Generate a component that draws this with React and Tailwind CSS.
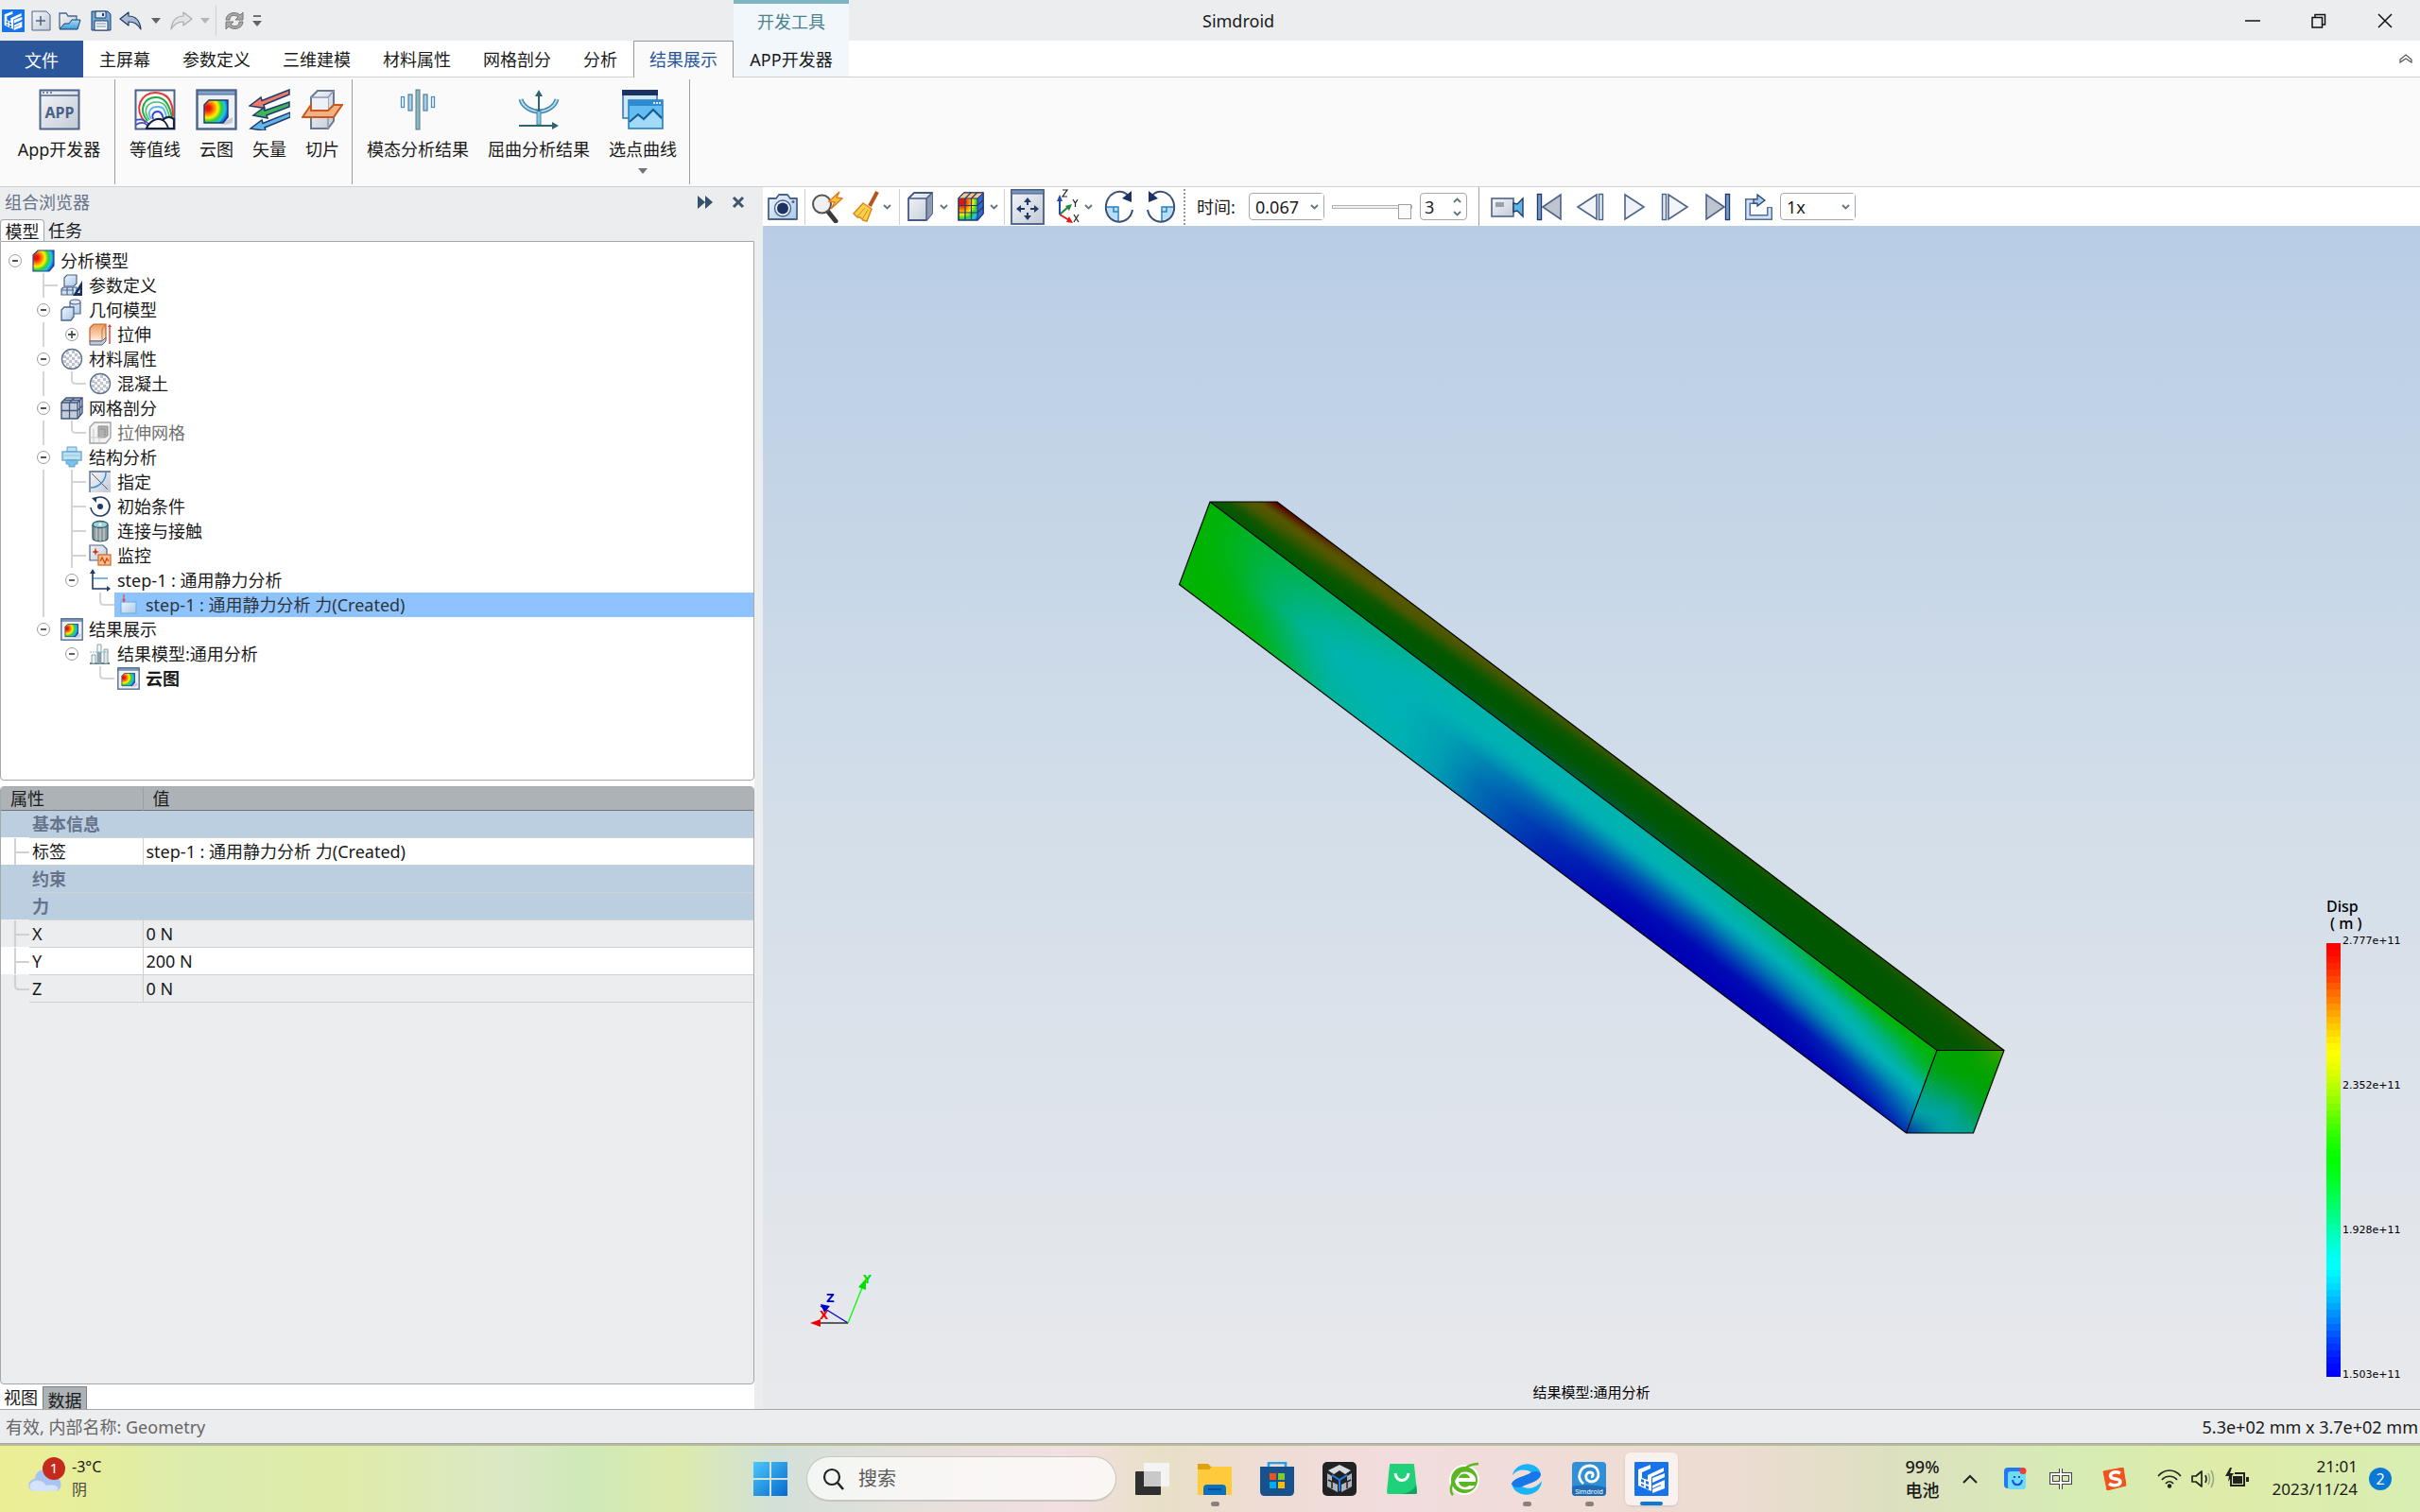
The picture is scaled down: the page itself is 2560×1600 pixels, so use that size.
import React from "react";

/* ---------- shared helpers ---------- */

const Svg = ({ w = 24, h = 24, vb, children, className = "" }) => (
  <svg width={w} height={h} viewBox={vb || `0 0 ${w} ${h}`} fill="none" className={`shrink-0 ${className}`} aria-hidden="true">
    {children}
  </svg>
);

const Defs = () => (
  <svg width="0" height="0" className="absolute" aria-hidden="true">
    <defs>
      <radialGradient id="rainbow" cx="0.15" cy="0.35" r="0.95">
        <stop offset="0.1" stopColor="#e8120c" />
        <stop offset="0.3" stopColor="#ff8a00" />
        <stop offset="0.45" stopColor="#fff200" />
        <stop offset="0.62" stopColor="#2fd23a" />
        <stop offset="0.78" stopColor="#19c6e8" />
        <stop offset="0.95" stopColor="#1b2fe0" />
      </radialGradient>
      <linearGradient id="steel" x1="0" y1="0" x2="1" y2="1">
        <stop offset="0" stopColor="#f4f6f9" />
        <stop offset="1" stopColor="#c3cad6" />
      </linearGradient>
      <linearGradient id="sky" x1="0" y1="0" x2="0" y2="1">
        <stop offset="0" stopColor="#a6dcf7" />
        <stop offset="1" stopColor="#3a9ade" />
      </linearGradient>
      <linearGradient id="ice" x1="0" y1="0" x2="1" y2="1">
        <stop offset="0" stopColor="#eef5fc" />
        <stop offset="1" stopColor="#a9c9e8" />
      </linearGradient>
      <linearGradient id="amber" x1="0" y1="0" x2="0" y2="1">
        <stop offset="0" stopColor="#ee9a5a" />
        <stop offset="1" stopColor="#fdf0e2" />
      </linearGradient>
      <linearGradient id="win" x1="0" y1="0" x2="1" y2="1">
        <stop offset="0" stopColor="#4cc8fb" />
        <stop offset="1" stopColor="#0669cc" />
      </linearGradient>
    </defs>
  </svg>
);

const NAVY = "#1f3a68";
const SLATE = "#4c6389";

const Caret = ({ className = "text-[#606468]" }) => (
  <Svg w={10} h={6} className={className}><path d="M0 0H10L5 6Z" fill="currentColor" /></Svg>
);
const Chevron = () => (
  <Svg w={9} h={6} className="text-[#5f7481]"><path d="M1 1 4.500 4.500 8 1" stroke="currentColor" strokeWidth="1.800" /></Svg>
);

const Logo = ({ size }) => (
  <Svg w={size} h={size} vb="0 0 36 36">
    <rect width="36" height="36" rx="1" fill="#1673ea" />
    <path d="M4 8 17 3V7L8 11V17L14 19V14L31 6V10L18 16V31L4 25Z" fill="#fff" />
    <path d="M19 17 32 12V16L19 22ZM19 25 32 19V28L19 33V29L28 25V24L19 28Z" fill="#fff" />
    <path d="M7 18 10 19V22L7 21ZM12 20 15 21V24L12 23ZM7 23 10 24V26L7 25ZM12 25 15 26V29L12 28Z" fill="#1673ea" />
  </Svg>
);

/* ---------- quick access icons ---------- */

const NewIcon = () => (
  <Svg w={22} h={22}><path d="M2 1H17L21 5V21H2Z" fill="url(#steel)" stroke={SLATE} /><path d="M11 6V16M6 11H16" stroke={SLATE} strokeWidth="1.500" /></Svg>
);
const OpenIcon = () => (
  <Svg w={24} h={22}><path d="M1 19V3H8L10 6H19V10" fill="url(#steel)" stroke={SLATE} strokeWidth="1.300" /><path d="M1 20 6 14H11L14 10H23L20 20Z" fill="url(#sky)" stroke={NAVY} /></Svg>
);
const SaveIcon = () => (
  <Svg w={22} h={22}><path d="M1 1H18L21 4V21H1Z" fill="#6ea9d6" stroke={NAVY} /><path d="M5 1H16V8H5Z" fill="#dcebf7" stroke={NAVY} /><path d="M12 3H14V6H12Z" fill={NAVY} /><path d="M4 11H18V21H4Z" fill="#f3f5f8" stroke={NAVY} /><path d="M6 14H16M6 17H16" stroke="#7d8ea8" /></Svg>
);
const UndoIcon = ({ flip }) => (
  <Svg w={24} h={20} className={flip ? "-scale-x-100 opacity-50" : ""}><path d="M1 8 10 1V5C18 5 22 10 23 19C19 13 16 11 10 11V15Z" fill={flip ? "#d8dadd" : "#a9bad1"} stroke={flip ? "#6a6d70" : NAVY} strokeWidth="1.200" strokeLinejoin="round" /></Svg>
);
const RefreshIcon = () => (
  <Svg w={22} h={22}><path d="M2 10C2 3 12 0 17 5L20 2V10H12L15 7C11 4 6 5 6 10Z" fill="#a8a8a8" stroke="#777" /><path d="M20 12C20 19 10 22 5 17L2 20V12H10L7 15C11 18 16 17 16 12Z" fill="#a8a8a8" stroke="#777" /></Svg>
);

/* ---------- ribbon icons ---------- */

const AppIcon = () => (
  <Svg w={44} h={44}>
    <rect x="1.500" y="1.500" width="41" height="41" fill="url(#steel)" stroke={SLATE} strokeWidth="2" />
    <path d="M2 7H42" stroke={SLATE} strokeWidth="1.500" /><path d="M4 4H6M8 4H10M12 4H14" stroke={SLATE} strokeWidth="1.500" />
    <text x="22" y="31" textAnchor="middle" fontSize="16" fontWeight="700" fontFamily="Noto Sans" fill="#4a6187">APP</text>
  </Svg>
);
const ContourIcon = () => (
  <Svg w={44} h={44}>
    <rect x="1.500" y="1.500" width="41" height="41" fill="#f7f9fc" stroke={SLATE} strokeWidth="2" />
    <path d="M12 36C-2 20 8 4 22 4S41 15 41 29" stroke="#e33" strokeWidth="2" />
    <path d="M14 34C3 20 12 9 23 9S38 19 40 31" stroke="#22a844" strokeWidth="2" />
    <path d="M16 33C8 22 14 14 24 14S35 22 38 32" stroke="#49c46a" strokeWidth="1.700" />
    <path d="M18 32C13 25 17 19 25 19S32 24 35 32" stroke="#5fb6e6" strokeWidth="1.800" />
    <path d="M20 32C18 27 21 24 25 24S30 28 31 32" stroke="#3046d8" strokeWidth="1.800" />
    <path d="M2 38C8 34 14 36 15 42M2 33C8 31 14 34 16 39" stroke="#3a50c8" strokeWidth="1.600" />
    <path d="M13 42C16 34 24 30 30 33C34 29 38 29 42 32V42Z" fill="#fff" stroke="#14213f" strokeWidth="2.200" />
    <path d="M30 33C33 35 35 38 36 42" stroke="#14213f" strokeWidth="1.800" />
  </Svg>
);
const CloudMapIcon = ({ size = 44 }) => (
  <Svg w={size} h={size} vb="0 0 44 44">
    <rect x="1.500" y="1.500" width="41" height="41" fill="#edf0f5" stroke={SLATE} strokeWidth="2.400" />
    <path d="M2 2H42V6H2Z" fill="#7fa3cf" stroke={SLATE} strokeWidth="1.200" />
    <path d="M26 37 39 30V36L32 38Z" fill="#c4cad4" />
    <path d="M9 17 14 12H34V30L29 36H9Z" fill="url(#rainbow)" stroke="#20386a" strokeWidth="1.400" />
  </Svg>
);
const VectorIcon = () => {
  const arrow = "M0 12 12 3 13 6.500 42 -5V0L15 11 16 14.500Z";
  return (
    <Svg w={44} h={44}>
      <path transform="translate(1 6)" d={arrow} fill="#ec7a6c" stroke={NAVY} strokeWidth="1.500" />
      <path transform="translate(5 18)" d="M0 10 11 2 12 5 38 -4V1L14 10 15 13Z" fill="#3db35a" stroke={NAVY} strokeWidth="1.500" />
      <path transform="translate(2 30)" d={arrow} fill="#62b4ec" stroke={NAVY} strokeWidth="1.500" />
    </Svg>
  );
};
const SliceIcon = () => (
  <Svg w={44} h={44}>
    <path d="M10 41V9L17 2H34V34L28 42H10Z" fill="url(#steel)" stroke="#6a7894" strokeWidth="2" />
    <path d="M10 9H28V42M28 9 34 2" stroke="#8f9bb0" strokeWidth="1.500" />
    <path d="M1 30 10 17V23H28L34 17H43L34 30Z" fill="#f3b183" stroke="#c9571b" strokeWidth="2" />
    <path d="M11 10H28V22H11Z" fill="#eef1f6" />
  </Svg>
);
const ModalIcon = () => (
  <Svg w={44} h={44}>
    <rect x="20" y="1" width="4" height="42" fill="#8fb7be" stroke="#4f7a88" />
    <rect x="12" y="6" width="4" height="17" fill="#a9cfe4" stroke="#4a7ea5" strokeWidth="1.200" />
    <rect x="28" y="6" width="4" height="17" fill="#a9cfe4" stroke="#4a7ea5" strokeWidth="1.200" />
    <rect x="4.500" y="8.500" width="3" height="11" stroke="#4a8fc4" strokeWidth="1.300" />
    <rect x="36.500" y="8.500" width="3" height="11" stroke="#4a8fc4" strokeWidth="1.300" />
  </Svg>
);
const BucklingIcon = () => (
  <Svg w={44} h={44}>
    <path d="M3 11C5 19 14 24 22 24S39 19 41 11" stroke="#3e86b0" strokeWidth="5" />
    <path d="M3 11C5 19 14 24 22 24S39 19 41 11" stroke="#b8dcee" strokeWidth="2" />
    <path d="M20 23H24V38H20Z" fill="#8ec3e2" stroke="#3e86b0" />
    <path d="M22 6V24" stroke="#2d6470" strokeWidth="2" /><path d="M22 1 26 8H18Z" fill="#2d6470" />
    <path d="M1 39H38" stroke="#2d6470" strokeWidth="2" /><path d="M36 35 43 39 36 43Z" fill="#2d6470" />
  </Svg>
);
const CurveIcon = () => (
  <Svg w={44} h={44}>
    <rect x="1" y="2" width="36" height="29" fill="#cfe8f6" stroke="#3b6fa5" strokeWidth="1.500" />
    <path d="M0 1H38V7H0Z" fill="#1c3263" />
    <rect x="7" y="12" width="36" height="30" fill="#62bdf0" stroke="#2779bb" strokeWidth="1.500" />
    <path d="M7 12H43V18H7Z" fill="#2f8bd0" /><path d="M33 15H41" stroke="#d6eefc" strokeWidth="2" strokeDasharray="2 1" />
    <path d="M8 35 17 27 23 32 33 22 42 31" stroke="#1c568f" strokeWidth="2" />
    <path d="M8 41V36L17 29 23 34 33 24 42 33V41Z" fill="#b3e2fa" opacity="0.8" />
  </Svg>
);

/* ---------- tree icons ---------- */

const RainbowCube = () => (
  <Svg><path d="M1 6 6 1H23V17L18 23H1Z" fill="url(#rainbow)" stroke="#27457c" strokeWidth="1.200" /></Svg>
);
const ParamIcon = () => (
  <Svg><path d="M4 13V4L7 1H17V10L14 13Z" fill="url(#ice)" stroke={SLATE} strokeWidth="1.200" /><path d="M1 22V16L3 14H17V22ZM1 17H14M7 14V22M13 14V22" fill="#cfe0f1" stroke={SLATE} strokeWidth="1.200" /><path d="M13 23 23 7V23ZM18 20H20.500V16Z" fill="#16305f" fillRule="evenodd" /></Svg>
);
const GeometryIcon = () => (
  <Svg><path d="M10 4V16H21V4" fill="url(#ice)" stroke={SLATE} strokeWidth="1.200" /><ellipse cx="15.500" cy="3.500" rx="5.500" ry="2.500" fill="#dce9f6" stroke={SLATE} strokeWidth="1.200" /><path d="M1 23V12L4 9H14V19L11 23Z" fill="url(#ice)" stroke={SLATE} strokeWidth="1.300" /></Svg>
);
const ExtrudeIcon = () => (
  <Svg><path d="M1 19V5L5 1H18V16L14 19Z" fill="url(#amber)" stroke="#bf5f2a" strokeWidth="1.200" /><path d="M1 19 14 19 18 15V19L14 23H1Z" fill="#c3cbd8" stroke={SLATE} /><path d="M14 19V6L18 1" stroke="#c9733e" /><path d="M22 3V22" stroke="#e33" strokeWidth="1.400" /><path d="M20 4 22 1 24 4Z" fill="#e33" /></Svg>
);
const MaterialIcon = () => (
  <Svg>
    <circle cx="12" cy="12" r="10.500" fill="#f6f7f9" />
    <path d="M6 4H9V7H6ZM12 3H15V6H12ZM9 7H12V10H9ZM15 6H18V9H15ZM3 8H6V11H3ZM6 10H9V13H6ZM12 10H15V13H12ZM18 9H21V12H18ZM3 13H6V16H3ZM9 13H12V16H9ZM15 13H18V16H15ZM6 16H9V19H6ZM12 16H15V19H12ZM18 15H20V18H18ZM9 19H12V22H9ZM15 19H17V21H15Z" fill="#bfc3c9" />
    <circle cx="12" cy="12" r="10.500" stroke="#5b7090" strokeWidth="1.400" />
  </Svg>
);
const MeshIcon = () => (
  <Svg><path d="M1 6 6 1H23V17L18 23H1Z" fill="#c5ccda" stroke="#41577d" strokeWidth="1.400" /><path d="M1 6H18V23M18 6 23 1M9.500 6V23M1 14.500H18M9.500 6 14.500 1M18 14.500 23 9.500M3.500 3.500H20.500V20" stroke="#41577d" strokeWidth="1.300" /></Svg>
);
const MeshGreyIcon = () => (
  <Svg><path d="M1 6 6 1H23V17L18 23H1Z" fill="#f2f2f2" stroke="#a3a3a3" strokeWidth="1.400" /><path d="M10 5H20V15L17 17H10Z" fill="#b0b0b0" stroke="#8e8e8e" /><path d="M12 8H17V15" stroke="#8e8e8e" /><path d="M5 8V22M1 17H16M11 17V23" stroke="#cacaca" /></Svg>
);
const StructureIcon = () => (
  <Svg><path d="M7 1H17V6H7Z" fill="#bfe0f2" stroke="#5aa4cf" /><rect x="2" y="6" width="20" height="9" fill="#bfe0f2" stroke="#5aa4cf" strokeWidth="1.300" /><path d="M6 15H18V19H15V22H9V19H6Z" fill="#7cc3ea" stroke="#5aa4cf" /><path d="M2 10H22" stroke="#8fc6e4" /></Svg>
);
const AssignIcon = () => (
  <Svg><path d="M1 1H23V23H1Z" fill="url(#steel)" /><path d="M1 23V1H23" stroke={SLATE} strokeWidth="1.300" /><path d="M3 3 20 20" stroke="#5a5f68" /><path d="M2 18C10 18 18 11 18 2" stroke="#3a92cf" strokeWidth="1.500" /></Svg>
);
const InitIcon = () => (
  <Svg><path d="M6 4A10 10 0 1 1 2 13" stroke={NAVY} strokeWidth="1.600" /><path d="M3 3 8 2 8 8Z" fill={NAVY} /><circle cx="12" cy="12" r="3" fill={NAVY} /></Svg>
);
const ContactIcon = () => (
  <Svg><path d="M4 5V19C4 24 20 24 20 19V5" fill="#8d989b" stroke="#2e5f68" strokeWidth="1.300" /><path d="M8 8V22M12 8V23M16 8V22" stroke="#dadedf" /><ellipse cx="12" cy="5" rx="8" ry="3.500" fill="#9ed0d8" stroke="#2e5f68" strokeWidth="1.300" /><circle cx="12" cy="5" r="1.500" fill="#fff" /></Svg>
);
const MonitorIcon = () => (
  <Svg><path d="M1 1H15L19 5V17H1Z" fill="url(#steel)" stroke={SLATE} strokeWidth="1.200" /><path d="M7 3 8 7 11 8 8 9 7 12 6 9 3 8 6 7Z" fill="#c0391e" /><rect x="10" y="11" width="13" height="11" fill="#f9c18e" stroke="#d9692a" strokeWidth="1.300" /><path d="M12 18 14 14 17 20 19 15 21 18" stroke="#c6471a" strokeWidth="1.300" /></Svg>
);
const StepIcon = () => (
  <Svg><path d="M4 3V21H21" stroke={NAVY} strokeWidth="1.600" /><path d="M1 5 4 0 7 5ZM19 18 23 21 19 24Z" fill={NAVY} /><path d="M5 10H20" stroke="#7ab8e0" strokeWidth="2" /></Svg>
);
const ForceIcon = () => (
  <Svg><rect x="4" y="9" width="16" height="12" fill="url(#ice)" stroke="#6da7dc" /><path d="M7 1V7" stroke="#d4554a" strokeWidth="1.300" /><path d="M5 6 7 10 9 6Z" fill="#d4554a" /></Svg>
);
const ResultModelIcon = () => (
  <Svg><path d="M1 22H22" stroke="#2e5f68" strokeWidth="1.600" /><path d="M3 13H7V22H3Z" fill="#eef2f4" stroke="#8ca0aa" /><path d="M9 2H13V22H9Z" fill="#f4f6f7" stroke="#8ca0aa" /><path d="M9 10H13V22H9Z" fill="#8ca0aa" /><path d="M16 7H20V22H16Z" fill="#dfe7ea" stroke="#8ca0aa" /><path d="M1 10H22" stroke="#7ab8e0" strokeDasharray="2 1" /></Svg>
);

/* ---------- viewport toolbar icons ---------- */

const CameraIcon = () => (
  <Svg w={34} h={30}><path d="M2 6H10L13 2H22L25 6H32V28H2Z" fill="url(#ice)" stroke={SLATE} strokeWidth="1.800" strokeLinejoin="round" /><circle cx="17" cy="16.500" r="8.500" fill="#e8f1fb" stroke={SLATE} strokeWidth="1.400" /><circle cx="17" cy="16.500" r="6" fill="#1c3263" /><circle cx="28" cy="9.500" r="1.500" fill={SLATE} /></Svg>
);
const SearchFlashIcon = () => (
  <Svg w={34} h={34}><path d="M18 22 26 32" stroke="#3a3a3a" strokeWidth="5" strokeLinecap="round" /><circle cx="11.500" cy="14" r="9.500" fill="#eef0f2" stroke="#555" strokeWidth="2" /><path d="M30 1 19 11 25 12 21 19 33 8 27 7Z" fill="#fbc23a" stroke="#e07a1c" strokeWidth="1.400" /></Svg>
);
const BroomIcon = () => (
  <Svg w={28} h={34}><path d="M26 1 18 16" stroke="#b4561d" strokeWidth="4" /><path d="M11 13 20 19 15 32 11 31 8 28 5 28 1 24Z" fill="#fccf4e" stroke="#d98a16" strokeWidth="1.500" /><path d="M13 18 5 27M16 20 10 30" stroke="#d98a16" /></Svg>
);
const CubeIcon = () => (
  <Svg w={30} h={34}><path d="M1 8 7 2H26V24L20 31H1Z" fill="url(#steel)" stroke="#455b82" strokeWidth="1.800" /><path d="M20 8 26 2V24L20 31Z" fill="#8e9bb3" /><path d="M1 8H20V31M20 8 26 2" stroke="#455b82" strokeWidth="1.400" /></Svg>
);
const ColorCubeIcon = () => (
  <Svg w={30} h={34}><path d="M1 8 7 2H27V24L21 31H1Z" fill="url(#rainbow)" stroke="#20386a" strokeWidth="1.600" /><path d="M1 8 7 2H27L21 8Z" fill="#f7c78c" stroke="#20386a" /><path d="M21 8 27 2V24L21 31Z" fill="#3566d8" stroke="#20386a" /><path d="M1 15.500H21L27 9.500M1 23H21L27 17M8 8V31M14.500 8V31M8 8 14 2M14.500 8 20.500 2" stroke="#20386a" strokeWidth="1.200" /></Svg>
);
const FitIcon = () => (
  <Svg w={36} h={38}><rect x="1" y="1" width="34" height="36" fill="url(#steel)" stroke="#455b82" strokeWidth="1.800" /><path d="M1 1H35V5H1Z" fill="#7895bd" stroke="#455b82" /><path d="M18 12V17M18 25V30M10 21H15M21 21H27" stroke={NAVY} strokeWidth="2" /><path d="M18 9 22 14H14ZM18 33 22 28H14ZM6 21 11 17V25ZM30 21 25 17V25Z" fill={NAVY} /></Svg>
);
const AxesIcon = () => (
  <Svg w={30} h={38}>
    <path d="M4 27V10" stroke="#2348b0" strokeWidth="2" /><path d="M4 6 7 13H1Z" fill="#2348b0" />
    <path d="M4 27 13 19" stroke="#178a3c" strokeWidth="2" /><path d="M17 16 14 23 10 18Z" fill="#178a3c" />
    <path d="M4 27 14 33" stroke="#e01818" strokeWidth="2" /><path d="M18 36 11 35 14 29Z" fill="#e01818" />
    <path d="M7 1H12L7 8H12M18 11 20.500 15 23 11M20.500 15V19M19 27 24 35M24 27 19 35" stroke="#222" strokeWidth="1.200" />
  </Svg>
);
const RotateIcon = ({ flip }) => (
  <Svg w={32} h={36} className={flip ? "-scale-x-100" : ""}>
    <path d="M3 18H14V32C7 31 3 25 3 18Z" fill="#b4e0f7" /><path d="M3 18H15V33" stroke="#2a7fbe" strokeWidth="1.500" /><path d="M10 18V23H15" stroke="#2a7fbe" strokeWidth="1.500" />
    <path d="M30 21C27 38 5 38 2 21C0 3 19 -4 26 7" stroke="#3a5078" strokeWidth="2" /><path d="M29 1V13L19 9Z" fill="#1c3263" />
  </Svg>
);
const VideoIcon = () => (
  <Svg w={36} h={24}><rect x="1" y="3" width="23" height="19" fill="url(#steel)" stroke={SLATE} strokeWidth="1.600" /><path d="M5 7H14V12H5Z" fill="#98a0ac" /><path d="M24 8 28 9 34 3V22L28 16 24 17Z" fill="#5fb6e6" stroke={NAVY} strokeWidth="1.400" /></Svg>
);
const EdgeIcon = ({ flip }) => (
  <Svg w={28} h={30} className={flip ? "-scale-x-100" : ""}><rect x="1.500" y="1.500" width="4" height="27" fill="#7aa0cf" stroke={NAVY} strokeWidth="1.400" /><path d="M7 15 26 2V28Z" fill="#bfc5ce" stroke={SLATE} strokeWidth="1.600" /></Svg>
);
const StepPlayIcon = ({ flip }) => (
  <Svg w={30} h={30} className={flip ? "-scale-x-100" : ""}><rect x="1.500" y="1.500" width="4" height="27" fill="#e0e6ef" stroke={SLATE} strokeWidth="1.400" /><path d="M8 2 28 15 8 28Z" fill="#f1f4f8" stroke={SLATE} strokeWidth="1.600" /></Svg>
);
const PlayIcon = () => (
  <Svg w={24} h={30}><path d="M2 2 22 15 2 28Z" fill="#eef2f7" stroke={SLATE} strokeWidth="1.600" /></Svg>
);
const LoopIcon = () => (
  <Svg w={30} h={30}><path d="M13 9H4V26H27V15" stroke="#4f6f9c" strokeWidth="6" /><path d="M12 9H4V26H27V16" stroke="#d3e3f3" strokeWidth="3" /><path d="M10 7H14V2L22 8 14 14V11H10Z" fill="#a9cdec" stroke={NAVY} strokeWidth="1.200" /></Svg>
);

/* ---------- title bar and ribbon ---------- */

const IconButton = ({ label, children, className = "" }) => (
  <button type="button" aria-label={label} className={`flex shrink-0 items-center justify-center ${className}`}>{children}</button>
);

const TitleBar = () => (
  <header className="flex h-[43px] shrink-0 bg-[#ecedef]">
    <div className="flex w-[776px] shrink-0 items-center pl-0.5">
      <Logo size={24} />
      <IconButton label="新建" className="ml-1.5"><NewIcon /></IconButton>
      <IconButton label="打开" className="ml-2"><OpenIcon /></IconButton>
      <IconButton label="保存" className="ml-2.5"><SaveIcon /></IconButton>
      <IconButton label="撤销" className="ml-2"><UndoIcon /></IconButton>
      <IconButton label="撤销列表" className="ml-2.5"><Caret /></IconButton>
      <IconButton label="重做" className="ml-2.5"><UndoIcon flip /></IconButton>
      <IconButton label="重做列表" className="ml-2"><Caret className="text-[#b4b6b8]" /></IconButton>
      <span className="ml-1.5 h-8 w-px bg-[#d0d0d0]" />
      <IconButton label="刷新" className="ml-2"><RefreshIcon /></IconButton>
      <IconButton label="自定义" className="ml-2 flex-col gap-1"><span className="h-0.5 w-2 bg-[#707478]" /><Caret /></IconButton>
    </div>
    <div className="flex w-[122px] shrink-0 items-center justify-center border-t-4 border-[#7fb4c1] bg-[#f2f7fb] pb-0.5 text-[#4b828e]">开发工具</div>
    <h1 className="flex flex-1 items-center pl-[374px] text-lg">Simdroid</h1>
    <div className="flex items-center pr-0.5">
      <IconButton label="最小化" className="h-full w-[70px]"><Svg w={16} h={16}><path d="M0 8H16" stroke="#111" strokeWidth="1.500" /></Svg></IconButton>
      <IconButton label="还原" className="h-full w-[70px]"><Svg w={16} h={16}><path d="M1 4.500H11.500V15H1ZM4 4V1.500H14.500V12H12" stroke="#111" strokeWidth="1.500" /></Svg></IconButton>
      <IconButton label="关闭" className="h-full w-[70px]"><Svg w={16} h={16}><path d="M1 1 15 15M15 1 1 15" stroke="#111" strokeWidth="1.500" /></Svg></IconButton>
    </div>
  </header>
);

const TABS = ["主屏幕", "参数定义", "三维建模", "材料属性", "网格剖分", "分析"];

const TabRow = () => (
  <nav className="flex h-[39px] shrink-0 bg-white">
    <button type="button" className="w-[88px] bg-[#2b579a] pt-0.5 text-white">文件</button>
    {TABS.map((t) => (
      <button type="button" key={t} className="border-b border-[#d0d0d0] px-[17px] pt-0.5">{t}</button>
    ))}
    <button type="button" aria-current="page" className="w-[106px] border-x border-t border-[#9a9a9a] bg-[#fafafa] text-[#2b579a]">结果展示</button>
    <button type="button" className="w-[122px] border-b border-[#d0d0d0] bg-[#f2f7fb] pt-0.5">APP开发器</button>
    <div className="flex flex-1 items-center justify-end border-b border-[#d0d0d0] pr-2">
      <IconButton label="折叠功能区"><Svg w={14} h={10}><path d="M1 6 7 1 13 6V9L7 5 1 9Z" stroke="#555" strokeWidth="1.200" /></Svg></IconButton>
    </div>
  </nav>
);

const RibbonButton = ({ icon, label, menu, className = "" }) => (
  <button type="button" className={`flex flex-col items-center ${className}`}>
    {icon}
    <span className="mt-2 leading-6">{label}</span>
    {menu && <Caret className="mt-2 text-[#707478]" />}
  </button>
);

const Ribbon = () => (
  <div className="flex h-[116px] shrink-0 border-b border-[#d0d0d0] bg-[#fafafa]">
    <div className="my-0.5 flex w-[122px] justify-center border-r border-[#a0a0a0] pt-2.5 pl-1"><RibbonButton icon={<AppIcon />} label="App开发器" /></div>
    <div className="my-0.5 flex w-[251px] justify-center gap-3 border-r border-[#a0a0a0] pt-2.5 pl-1.5">
      <RibbonButton icon={<ContourIcon />} label="等值线" />
      <RibbonButton icon={<CloudMapIcon />} label="云图" className="ml-1" />
      <RibbonButton icon={<VectorIcon />} label="矢量" />
      <RibbonButton icon={<SliceIcon />} label="切片" />
    </div>
    <div className="my-0.5 flex w-[357px] justify-center gap-5 border-r border-[#a0a0a0] pt-2.5 pl-0.5">
      <RibbonButton icon={<ModalIcon />} label="模态分析结果" />
      <RibbonButton icon={<BucklingIcon />} label="屈曲分析结果" />
      <RibbonButton icon={<CurveIcon />} label="选点曲线" menu />
    </div>
  </div>
);

/* ---------- model tree ---------- */

/* Guide cells: blank, "|" line, "t" branch, "l" last branch, "-" open node, "+" closed node. */
const TREE = [
  ["-", RainbowCube, "分析模型"],
  [" t", ParamIcon, "参数定义"],
  [" -", GeometryIcon, "几何模型"],
  [" |+", ExtrudeIcon, "拉伸"],
  [" -", MaterialIcon, "材料属性"],
  [" |l", MaterialIcon, "混凝土"],
  [" -", MeshIcon, "网格剖分"],
  [" |l", MeshGreyIcon, "拉伸网格", "text-[#707070]"],
  [" -", StructureIcon, "结构分析"],
  [" |t", AssignIcon, "指定"],
  [" |t", InitIcon, "初始条件"],
  [" |t", ContactIcon, "连接与接触"],
  [" |t", MonitorIcon, "监控"],
  [" |-", StepIcon, "step-1 : 通用静力分析"],
  [" | l", ForceIcon, "step-1 : 通用静力分析 力(Created)", "bg-[#8dc4ff] text-[#303438]"],
  [" -", () => <CloudMapIcon size={24} />, "结果展示"],
  ["  -", ResultModelIcon, "结果模型:通用分析"],
  ["   l", () => <CloudMapIcon size={24} />, "云图", "font-bold"],
];

const GUIDES = { "|": "M15 0V26", t: "M15 0V26M16 13H30", l: "M15 0V9Q15 13 19 13H30" };

const Guide = ({ kind }) => {
  if (kind === "-" || kind === "+") {
    return (
      <button type="button" aria-label={kind === "-" ? "折叠" : "展开"} className="w-[30px]">
        <Svg w={30} h={26}>
          <circle cx="15" cy="13" r="6.500" fill="#fff" stroke="#9a9ea3" />
          <path d={kind === "+" ? "M11 13H19M15 9V17" : "M12 13H18"} stroke="#4b5158" strokeWidth="1.800" />
        </Svg>
      </button>
    );
  }
  return <Svg w={30} h={26}>{GUIDES[kind] && <path d={GUIDES[kind]} stroke="#d4d4d4" strokeWidth="2" />}</Svg>;
};

const ModelTree = () => (
  <ul className="flex-1 overflow-hidden rounded-b-sm border border-[#a5a8ab] bg-white pt-[7px]">
    {TREE.map(([guides, Icon, label, cls = ""], i) => (
      <li key={i} className="flex h-[26px] items-stretch">
        {guides.split("").map((g, j) => <Guide key={j} kind={g} />)}
        <span className={`flex flex-1 items-center gap-1.5 pl-[3px] whitespace-pre ${cls}`}><Icon />{label}</span>
      </li>
    ))}
  </ul>
);

/* ---------- property table ---------- */

const PROPS = [
  { section: "基本信息" },
  { name: "标签", value: "step-1 : 通用静力分析 力(Created)", bg: "bg-white", line: "M15 0V28M15 15H30" },
  { section: "约束" },
  { section: "力" },
  { name: "X", value: "0 N", bg: "", line: "M15 0V29M15 15H30" },
  { name: "Y", value: "200 N", bg: "bg-white", line: "M15 0V29M15 15H30" },
  { name: "Z", value: "0 N", bg: "", line: "M15 0V11Q15 15 19 15H30" },
];

const PropertyTable = () => (
  <div className="flex-1 overflow-hidden rounded-sm border border-[#a5a8ab] bg-[#ecedef]">
    <table className="w-full table-fixed border-collapse">
      <colgroup><col className="w-[30px]" /><col className="w-[120px]" /><col /></colgroup>
      <thead className="bg-[#adb2b6] text-left">
        <tr className="h-6 border-b border-[#6f767b]">
          <th colSpan={2} className="border-r border-[#9aa0a5] p-0 pl-2.5 leading-[22px] font-normal">属性</th>
          <th className="p-0 pl-2.5 leading-[22px] font-normal">值</th>
        </tr>
      </thead>
      <tbody>
        {PROPS.map((p, i) =>
          p.section ? (
            <tr key={i} className="h-[29px] bg-[#bccfe1]">
              <td className="p-0" />
              <th colSpan={2} className="border-b border-[#d0d3d6] p-0 pl-[3px] text-left leading-7 font-bold text-[#66738a]">{p.section}</th>
            </tr>
          ) : (
            <tr key={i} className={`h-[29px] ${p.bg}`}>
              <td className="p-0"><Svg w={30} h={28} className="block"><path d={p.line} stroke="#d0d0d0" strokeWidth="2" /></Svg></td>
              <th className="border-r border-b border-[#d0d0d0] p-0 pl-[3px] text-left leading-7 font-normal">{p.name}</th>
              <td className="border-b border-[#d0d0d0] p-0 pl-[3px] leading-7">{p.value}</td>
            </tr>
          )
        )}
      </tbody>
    </table>
  </div>
);

const SidePanel = () => (
  <aside className="flex w-[798px] shrink-0 flex-col bg-[#ecedef]">
    <div className="flex h-[34px] items-center pb-0.5 pl-[5px] text-[#66738a]">
      <h2 className="flex-1">组合浏览器</h2>
      <IconButton label="停靠" className="w-[35px]"><Svg w={16} h={14}><path d="M0 0 8 7 0 14ZM8 0 16 7 8 14Z" fill="#34506b" /></Svg></IconButton>
      <IconButton label="关闭面板" className="w-[35px]"><Svg w={14} h={14}><path d="M2 2 12 12M12 2 2 12" stroke="#42566b" strokeWidth="3" /></Svg></IconButton>
    </div>
    <div className="flex h-[23px] items-stretch leading-6">
      <button type="button" className="-mb-px w-[47px] rounded-t-sm border border-b-0 border-[#a5a8ab] bg-white">模型</button>
      <button type="button" className="px-1">任务</button>
    </div>
    <div className="flex flex-1 flex-col bg-white">
      <div className="flex flex-[571_1_0px] flex-col"><ModelTree /></div>
      <div className="h-1.5" />
      <div className="flex flex-[633_1_0px] flex-col"><PropertyTable /></div>
      <div className="flex h-[26px] shrink-0 items-stretch pt-0.5 pl-1">
        <button type="button" className="w-9 leading-6">视图</button>
        <button type="button" className="ml-[5px] w-[47px] border border-b-0 border-[#7d8185] bg-[#adb2b6] pt-0.5 leading-6">数据</button>
      </div>
    </div>
  </aside>
);

/* ---------- viewport ---------- */

const Divider = ({ className = "mx-1.5" }) => <span className={`h-[38px] w-px shrink-0 bg-[#cfcfcf] ${className}`} />;

const Select = ({ label, value, className }) => (
  <span className={`relative flex h-[29px] items-center rounded-sm border border-[#a5a8ab] bg-white ${className}`}>
    <select aria-label={label} defaultValue={value} className="h-full w-full appearance-none bg-transparent pl-1.5 outline-none"><option>{value}</option></select>
    <span className="pointer-events-none absolute right-0 flex h-full w-5 items-center justify-center bg-white"><Chevron /></span>
  </span>
);

const ViewToolbar = () => (
  <div className="flex h-[41px] shrink-0 items-center bg-white pl-1">
    <IconButton label="截图"><CameraIcon /></IconButton>
    <Divider />
    <IconButton label="快速缩放"><SearchFlashIcon /></IconButton>
    <IconButton label="清除" className="ml-2.5 gap-1"><BroomIcon /><Chevron /></IconButton>
    <Divider className="mx-2" />
    <IconButton label="显示方式" className="gap-1"><CubeIcon /><Chevron /></IconButton>
    <IconButton label="网格显示" className="ml-2.5 gap-1"><ColorCubeIcon /><Chevron /></IconButton>
    <Divider className="mx-1.5" />
    <IconButton label="适应窗口"><FitIcon /></IconButton>
    <IconButton label="视图方向" className="ml-3"><AxesIcon /><Chevron /></IconButton>
    <IconButton label="顺时针旋转" className="ml-3"><RotateIcon /></IconButton>
    <IconButton label="逆时针旋转" className="ml-3"><RotateIcon flip /></IconButton>
    <span className="ml-2 h-[38px] border-l-2 border-dotted border-[#9a9a9a]" />
    <span className="ml-3 w-[55px]">时间:</span>
    <Select label="时间" value="0.067" className="w-[80px]" />
    <input
      type="range" min="0" max="3" defaultValue="3" aria-label="帧"
      className="ml-2 h-[19px] w-[85px] appearance-none bg-transparent [&::-webkit-slider-runnable-track]:h-1 [&::-webkit-slider-runnable-track]:border [&::-webkit-slider-runnable-track]:border-[#b4b4b4] [&::-webkit-slider-runnable-track]:bg-[#f0f0f0] [&::-webkit-slider-thumb]:-mt-0.5 [&::-webkit-slider-thumb]:h-4 [&::-webkit-slider-thumb]:w-[14px] [&::-webkit-slider-thumb]:appearance-none [&::-webkit-slider-thumb]:border [&::-webkit-slider-thumb]:border-[#a0a0a0] [&::-webkit-slider-thumb]:bg-[#fafafa]"
    />
    <span className="ml-2 flex h-[29px] w-[50px] items-center rounded-sm border border-[#a5a8ab] bg-white">
      <input type="text" aria-label="帧号" defaultValue="3" className="w-[29px] pl-1 outline-none" />
      <span className="flex flex-1 flex-col items-center gap-2">
        <IconButton label="增加" className="rotate-180"><Chevron /></IconButton>
        <IconButton label="减少"><Chevron /></IconButton>
      </span>
    </span>
    <span className="ml-3 h-full w-px bg-[#a0a0a0]" />
    <IconButton label="录制" className="ml-3"><VideoIcon /></IconButton>
    <IconButton label="首帧" className="ml-3"><EdgeIcon /></IconButton>
    <IconButton label="上一帧" className="ml-3.5"><StepPlayIcon flip /></IconButton>
    <IconButton label="播放" className="ml-5"><PlayIcon /></IconButton>
    <IconButton label="下一帧" className="ml-4"><StepPlayIcon /></IconButton>
    <IconButton label="末帧" className="ml-4"><EdgeIcon flip /></IconButton>
    <IconButton label="循环" className="ml-3.5"><LoopIcon /></IconButton>
    <Select label="速度" value="1x" className="ml-2 w-[80px]" />
  </div>
);

/* Field values run 0 (blue) – 1 (cyan) – 2 (green) – 3 (yellow) – 4 (red). */
const RAMP = [[0, 0, 1], [0, 1, 1], [0, 1, 0], [1, 1, 0], [1, 0, 0]];
const fieldColor = (s, shade) => {
  const t = Math.max(0, Math.min(3.9999, s));
  const i = Math.floor(t);
  const f = t - i;
  const k = f * f * (3 - 2 * f) * 0.5 + f * 0.5;
  return `rgb(${RAMP[i].map((c, n) => Math.round(255 * shade * (c + (RAMP[i + 1][n] - c) * k))).join(",")})`;
};

const FRONT = {
  u: [0, 5, 10, 15, 20, 30, 35, 40, 45, 50, 60, 70, 80, 85, 90, 95, 100],
  rows: [
    [2, 1.75, 1.6, 1.48, 1.38, 1.15, 1.1, 1.05, 1.05, 1.05, 1.08, 1.2, 1.5, 1.8, 1.95, 2, 2],
    [2, 1.75, 1.5, 1.33, 1.18, 1.0, 1.0, 0.98, 0.96, 0.96, 0.95, 0.98, 1.02, 1.08, 1.2, 1.4, 1.7],
    [2, 1.83, 1.5, 1.2, 1.04, 0.96, 0.86, 0.7, 0.6, 0.55, 0.48, 0.48, 0.6, 0.7, 0.82, 0.94, 1],
    [2, 1.95, 1.72, 1.38, 1.1, 0.97, 0.84, 0.6, 0.44, 0.3, 0.14, 0.08, 0.12, 0.18, 0.3, 0.46, 0.68],
    [2, 1.98, 1.88, 1.58, 1.22, 0.98, 0.84, 0.6, 0.4, 0.22, 0, 0, 0, 0, 0.04, 0.14, 0.32],
  ],
};
const TOP = {
  u: [0, 5, 10, 20, 30, 50, 60, 75, 85, 100],
  rows: [
    [2.05, 2, 2, 1.9, 1.7, 1.45, 1.45, 1.7, 1.95, 2.02],
    [2.25, 2.2, 2.15, 2.05, 2, 1.85, 1.85, 1.95, 2, 2.03],
    [2.8, 2.65, 2.5, 2.2, 2.05, 2, 2, 2, 2, 2.1],
    [3.1, 3, 2.95, 2.8, 2.5, 2.1, 2.02, 2, 2.05, 2.3],
    [4, 3.7, 3.3, 3, 2.9, 2.6, 2.4, 2.25, 2.35, 2.6],
  ],
};
const END = {
  u: [0, 50, 100],
  rows: [[2, 2, 2.45], [1.75, 2, 2.1], [1.3, 1.6, 1.95], [0.95, 1.1, 1.65], [0.35, 0.9, 1.2]],
};

const Face = ({ id, field, shade, matrix, strips }) => (
  <g transform={matrix} shapeRendering="crispEdges">
    {Array.from({ length: strips }, (_, i) => {
      const pos = (i / (strips - 1)) * (field.rows.length - 1);
      const r = Math.min(field.rows.length - 2, Math.floor(pos));
      const f = pos - r;
      const y = (100 * i) / strips;
      return (
        <g key={i}>
          <linearGradient id={`${id}${i}`} gradientUnits="userSpaceOnUse" x1="0" y1="0" x2="100" y2="0">
            {Array.from({ length: 41 }, (_, n) => {
              const u = n * 2.5;
              const j = Math.max(0, field.u.findIndex((v, q) => u >= v && u <= field.u[q + 1]));
              const g = (u - field.u[j]) / (field.u[j + 1] - field.u[j]);
              const at = (row) => row[j] + (row[j + 1] - row[j]) * g;
              return <stop key={n} offset={u / 100} stopColor={fieldColor(at(field.rows[r]) * (1 - f) + at(field.rows[r + 1]) * f, shade)} />;
            })}
          </linearGradient>
          <rect x="0" y={y} width="100" height={100 - y} fill={`url(#${id}${i})`} />
        </g>
      );
    })}
  </g>
);

const Scene = () => (
  <svg viewBox="807 239 1753 1252" className="absolute inset-0 h-full w-full" role="img" aria-label="位移云图">
    <Face id="top" field={TOP} shade={0.34} strips={48} matrix="matrix(7.69 5.805 0.71 0 1280 531)" />
    <Face id="front" field={FRONT} shade={0.7} strips={64} matrix="matrix(7.69 5.805 -0.325 0.875 1280 531)" />
    <Face id="end" field={END} shade={0.64} strips={44} matrix="matrix(0.71 0 -0.325 0.875 2049 1111.500)" />
    <path d="M1280 531H1351L2120 1111.500L2087.500 1199H2016.500L1247.500 618.500ZL2049 1111.500H2120M2049 1111.500L2016.500 1199" stroke="#000" strokeWidth="1.200" fill="none" />
    <g strokeWidth="1.300">
      <path d="M897 1400 868 1382" stroke="#00c" /><path d="M897 1400H866" stroke="#111" /><path d="M897 1400 913 1360" stroke="#0f0" />
      <path d="M857 1400 868 1396V1404Z" fill="#e00" /><path d="M916 1353 916 1365 908 1362Z" fill="#0d0" /><path d="M868 1380 878 1382 872 1389Z" fill="#00c" />
    </g>
    <g fontFamily="DejaVu Sans" fontSize="12" fontWeight="700">
      <text x="867" y="1396" fill="#e00">X</text><text x="913" y="1358" fill="#0d0">Y</text><text x="874" y="1378" fill="#0000c8">Z</text>
    </g>
  </svg>
);

const BANDS = 65;
const Legend = () => (
  <div className="absolute right-0 bottom-[34px] w-[99px] text-black">
    <div className="text-base leading-[18px] font-medium">Disp<br /><span className="pl-1">( m )</span></div>
    <div className="mt-3 flex h-[459px] gap-0.5">
      <div className="flex w-[15px] flex-col">
        {Array.from({ length: BANDS }, (_, i) => (
          <span key={i} className="flex-1" style={{ backgroundColor: fieldColor(4 * (1 - i / (BANDS - 1)), 1) }} />
        ))}
      </div>
      <div className="-mt-2 -mb-1 flex flex-col justify-between font-['DejaVu_Sans',sans-serif] text-[11px] leading-3">
        <span>2.777e+11</span><span>2.352e+11</span><span>1.928e+11</span><span>1.503e+11</span>
      </div>
    </div>
  </div>
);

const Viewport = () => (
  <main className="flex min-w-0 flex-1 flex-col">
    <ViewToolbar />
    <section className="relative flex flex-1 items-end justify-center bg-linear-to-b from-[#b8cde5] via-[#d3dee9] to-[#e8e9ec]">
      <Scene />
      <Legend />
      <p className="relative pb-2 text-[15px] leading-5 text-black">结果模型:通用分析</p>
    </section>
  </main>
);

/* ---------- system taskbar ---------- */

const TaskIcon = ({ label, running, active, children }) => (
  <button type="button" aria-label={label} className={`relative flex h-14 w-14 items-center justify-center rounded-md ${active ? "bg-white/60 shadow-sm" : ""}`}>
    {children}
    {running && <span className="absolute -bottom-px h-[5px] w-[9px] rounded-full bg-[#8a7f7e]" />}
    {active && <span className="absolute bottom-0 h-1 w-6 rounded-full bg-[#0a78d6]" />}
  </button>
);

const Taskbar = () => (
  <footer className="relative flex h-[72px] shrink-0 items-center border-t-2 border-[#b9bb9c] bg-[linear-gradient(90deg,#ecee94_0%,#e6ee9c_4%,#dcecb0_8%,#dfeca8_14%,#dbe8c6_21%,#cfe9b8_24%,#dcebac_28%,#d2e0d8_32%,#e6e0dc_38%,#f2dfe2_44%,#e8e0c6_48%,#efdcd4_52%,#f2dcde_58%,#efdcd4_66%,#ecdcd2_72%,#dde0c0_78%,#d6ecb4_86%,#dfeca8_92%,#d8eeb2_100%)]">
    <button type="button" className="flex flex-1 items-center gap-1.5 pb-0.5 pl-7 text-left text-base leading-6">
      <Svg w={42} h={44}>
        <path d="M10 36C0 36 0 24 9 23C9 12 24 9 28 20C38 19 40 36 30 36Z" fill="#a9c4f2" /><path d="M10 36C2 36 1 27 9 25C17 24 19 28 21 30C31 27 37 33 31 36Z" fill="#d4e3fb" />
        <circle cx="29" cy="12" r="12" fill="#c42b1c" />
        <text x="29" y="17" textAnchor="middle" fontSize="15" fontFamily="Noto Sans" fill="#fff">1</text>
      </Svg>
      <span>-3°C<br /><span className="text-[#444]">阴</span></span>
    </button>
    <div className="ml-1 flex items-center gap-2.5">
      <TaskIcon label="开始"><Svg w={36} h={36}><path d="M0 0H17V17H0ZM19 0H36V17H19ZM0 19H17V36H0ZM19 19H36V36H19Z" fill="url(#win)" /></Svg></TaskIcon>
      <label className="flex h-12 w-[328px] items-center gap-3.5 rounded-full border border-b-2 border-[#c8c5bf] bg-white/70 px-4 text-xl">
        <Svg w={24} h={24}><circle cx="10" cy="10" r="8" stroke="#222" strokeWidth="2.200" /><path d="M16 16 22 23" stroke="#222" strokeWidth="2.600" /></Svg>
        <input type="text" aria-label="搜索" placeholder="搜索" className="w-full bg-transparent outline-none placeholder:text-[#5a5a5a]" />
      </label>
      <TaskIcon label="任务视图"><Svg w={36} h={34}><rect x="0" y="9" width="27" height="25" rx="1" fill="#2f2f2f" /><rect x="9" y="0" width="27" height="25" rx="1" fill="#f4f4f4" /><path d="M9 9H27V25H9Z" fill="#c9c9c9" /></Svg></TaskIcon>
      <TaskIcon label="文件资源管理器" running><Svg w={36} h={34}><path d="M0 1H11L14 4H36V12H0Z" fill="#e0a208" /><path d="M0 7H12L15 4H36V34H0Z" fill="#ffca3c" /><path d="M6 34V27Q6 23 10 23H26Q30 23 30 27V34Z" fill="#0b6fc2" /><path d="M11 28H25" stroke="#0a4f91" strokeWidth="2" /></Svg></TaskIcon>
      <TaskIcon label="应用商店"><Svg w={36} h={36}><path d="M9 7V1H27V7" stroke="#1aa4ee" strokeWidth="2.600" /><path d="M0 5H36V31Q36 36 31 36H5Q0 36 0 31Z" fill="#17528f" /><path d="M10 12H17V19H10Z" fill="#f1511b" /><path d="M19 12H26V19H19Z" fill="#80cc28" /><path d="M10 21H17V28H10Z" fill="#00adef" /><path d="M19 21H26V28H19Z" fill="#fbbc09" /></Svg></TaskIcon>
      <TaskIcon label="立方体工具"><Svg w={36} h={36}><rect width="36" height="36" rx="5" fill="#202224" /><path d="M18 3 30 9 24 13 18 9 12 13 6 9Z" fill="#d8dade" /><path d="M5 12 10 15V21L16 24V32L5 26ZM31 12 26 15V21L20 24V32L31 26Z" fill="#aeb2bb" /><path d="M10 14 18 19 26 14M18 19V31" stroke="#1f7cf0" strokeWidth="2" /><path d="M6 19 10 21V28M30 19 26 21V28" stroke="#202224" strokeWidth="1.500" /></Svg></TaskIcon>
      <TaskIcon label="软件商城"><Svg w={32} h={32}><path d="M3 1Q3 0 4 0H28Q29 0 29 1L32 30Q32 32 30 32H2Q0 32 0 30Z" fill="#1fd279" /><path d="M32 30Q32 32 30 32H15Q28 30 31 22Z" fill="#0ba65c" /><path d="M9 10C10 20 22 20 23 10" stroke="#fff" strokeWidth="3" /></Svg></TaskIcon>
      <TaskIcon label="浏览器"><Svg w={36} h={36}><circle cx="18" cy="19" r="16" fill="#fff" /><circle cx="18" cy="19" r="14" fill="#5cb624" /><path d="M12 17C13 11 23 11 24 17ZM12 21H30V18C28 8 8 8 8 19C8 31 26 32 29 25H23C20 28 13 27 12 21Z" fill="#fff" /><path d="M6 35C-2 27 14 2 33 2" stroke="#5cb624" strokeWidth="2.500" /></Svg></TaskIcon>
      <TaskIcon label="云浏览器" running><Svg w={36} h={36}><path d="M3 14C6 -1 30 -2 33 13C32 20 22 22 13 26C21 30 29 27 34 20C33 38 6 40 2 23C5 16 16 16 23 11C16 7 8 8 3 14Z" fill="#19b4f8" /><path d="M2 23C5 16 16 16 23 11C28 9 32 10 33 13C32 20 22 22 13 26C8 28 4 27 2 23Z" fill="#1877e8" /></Svg></TaskIcon>
      <TaskIcon label="Simdroid 启动器" running><Svg w={36} h={36}><rect width="36" height="36" rx="4" fill="#2f8fd8" /><path d="M0 26Q18 22 36 27V32Q36 36 32 36H4Q0 36 0 32Z" fill="#1f6cb4" /><path d="M12 23C4 17 8 4 19 4S31 20 21 21C13 21 13 11 19 11C23 11 23 16 20 16" stroke="#fff" strokeWidth="2.800" /><text x="18" y="34" textAnchor="middle" fontSize="7" fontFamily="Noto Sans" fill="#fff">Simdroid</text></Svg></TaskIcon>
      <TaskIcon label="Simdroid" active><Logo size={36} /></TaskIcon>
    </div>
    <div className="flex flex-1 items-center justify-end pr-[30px] text-base leading-6">
      <span className="text-lg leading-[25px] font-medium">99%<br />电池</span>
      <IconButton label="显示隐藏的图标" className="ml-6"><Svg w={16} h={10}><path d="M1 9 8 2 15 9" stroke="#222" strokeWidth="2" /></Svg></IconButton>
      <Svg w={24} h={24} className="ml-7"><rect x="0" y="0" width="21" height="22" rx="4" fill="#2478f4" /><rect x="4" y="4" width="19" height="19" rx="3" fill="#6fdcf6" /><path d="M9 13C10 20 18 20 19 13M11 9V11M16 9V11" stroke="#1b4fe0" strokeWidth="2" /><circle cx="20" cy="3.500" r="3.500" fill="#f53b3b" /></Svg>
      <Svg w={24} h={24} className="ml-6"><path d="M2 7H22V16H2ZM12 1V23" stroke="#444" strokeWidth="4" /><path d="M2 7H22V16H2ZM12 1V23" stroke="#fff" strokeWidth="1.800" /></Svg>
      <Svg w={26} h={24} className="ml-8"><path d="M1 4 22 0 25 19 5 24Z" fill="#f0531c" stroke="#f0531c" strokeLinejoin="round" /><path d="M19 6C13 3 7 6 9 10C11 13 19 11 19 15C19 19 11 20 7 17" stroke="#fff" strokeWidth="3.500" /></Svg>
      <Svg w={26} h={24} className="ml-8"><path d="M1 9C8 1 18 1 25 9M5 13C9 8 17 8 21 13M9 17C11 14 15 14 17 17" stroke="#222" strokeWidth="1.700" /><circle cx="13" cy="19.500" r="2.200" fill="#222" /></Svg>
      <Svg w={26} h={24} className="ml-2.5"><path d="M1 9H5L11 4V20L5 15H1Z" stroke="#222" strokeWidth="1.700" strokeLinejoin="round" /><path d="M15 8Q17 12 15 16" stroke="#222" strokeWidth="1.600" /><path d="M18 6Q21 12 18 18M21 3Q26 12 21 21" stroke="#9ba884" strokeWidth="1.600" /></Svg>
      <Svg w={26} h={24} className="ml-2.5"><path d="M6 8V19H20V6H10" stroke="#222" strokeWidth="2" /><path d="M8 9H18V17H8Z" fill="#222" /><path d="M22 10H25V15H22Z" fill="#222" /><path d="M5 0 0 9H4L3 15 9 6H5L7 0Z" fill="#222" /></Svg>
      <span className="ml-6 pb-0.5 text-right text-[17px]">21:01<br />2023/11/24</span>
      <span className="ml-3 flex h-6 w-6 items-center justify-center rounded-full bg-[#0a78d6] text-base text-white">2</span>
    </div>
  </footer>
);

export default function App() {
  return (
    <div className="flex h-screen min-h-[900px] w-full flex-col overflow-hidden bg-[#ecedef] font-['Noto_Sans','Noto_Sans_CJK_SC',sans-serif] text-lg leading-6 text-[#1a1a1a]">
      <Defs />
      <TitleBar />
      <TabRow />
      <Ribbon />
      <div className="flex min-h-0 flex-1 gap-[9px]">
        <SidePanel />
        <Viewport />
      </div>
      <div className="flex h-[37px] shrink-0 items-center justify-between border-y border-[#a5a8ab] px-0.5">
        <span className="pl-1 text-[#666]">有效, 内部名称: Geometry</span>
        <span>5.3e+02 mm x 3.7e+02 mm</span>
      </div>
      <Taskbar />
    </div>
  );
}
